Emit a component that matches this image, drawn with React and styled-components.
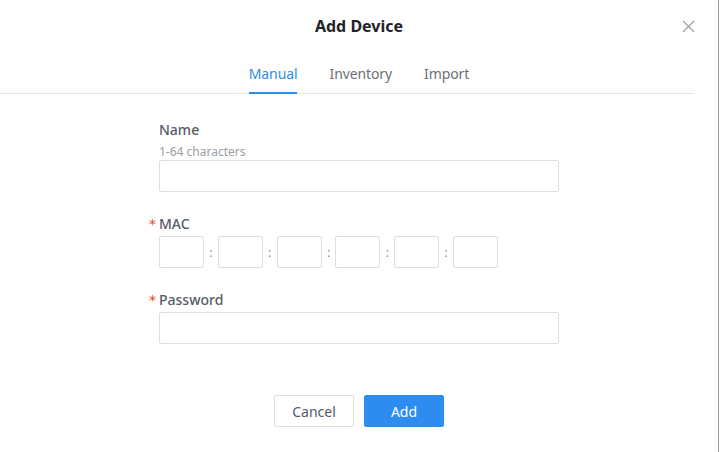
import React from "react";
import styled, { createGlobalStyle } from "styled-components";

const GlobalStyle = createGlobalStyle`
  html, body {
    margin: 0;
    padding: 0;
    background: #ffffff;
  }
  body {
    font-family: "Noto Sans", "Open Sans", Arial, sans-serif;
    -webkit-font-smoothing: antialiased;
  }
  * {
    box-sizing: border-box;
  }
`;

const Modal = styled.div`
  width: 719px;
  height: 452px;
  background: #fff;
  border-right: 1px solid #9a9a9a;
  display: flex;
  flex-direction: column;
`;

const Header = styled.div`
  height: 52px;
  display: grid;
  grid-template-columns: 1fr auto 1fr;
  align-items: center;
`;

const Title = styled.div`
  grid-column: 2;
  font-size: 16px;
  line-height: 24px;
  font-weight: 700;
  color: #1f2329;
`;

const Close = styled.button`
  grid-column: 3;
  justify-self: end;
  margin-right: 23px;
  width: 13px;
  height: 13px;
  padding: 0;
  border: 0;
  background: none;
  cursor: pointer;
  display: flex;
`;

const TabBar = styled.div`
  display: flex;
  justify-content: center;
  gap: 32px;
  margin-right: 24px;
  padding-left: 24px;
  border-bottom: 1px solid #e4e6eb;
`;

const Tab = styled.div`
  padding-top: 12px;
  padding-bottom: 8px;
  font-size: 14px;
  line-height: 20px;
  letter-spacing: -0.1px;
  color: ${(p) => (p.active ? "#2d8cf0" : "#6b6f76")};
  border-bottom: 2px solid ${(p) => (p.active ? "#2d8cf0" : "transparent")};
  margin-bottom: -1px;
  cursor: pointer;
`;

const Form = styled.div`
  width: 400px;
  margin: 0 auto;
  padding-top: 26px;
  display: flex;
  flex-direction: column;
`;

const Field = styled.div`
  display: flex;
  flex-direction: column;
  margin-bottom: 22px;
`;

const Label = styled.div`
  display: flex;
  align-items: center;
  font-size: 14px;
  line-height: 20px;
  font-weight: 500;
  color: #555b66;
  margin-bottom: ${(p) => (p.tight ? "0" : "2px")};
`;

const Star = styled.span`
  width: 10px;
  margin-left: -10px;
  color: #ed4014;
  font-size: 14px;
  line-height: 20px;
  font-family: "DejaVu Sans", sans-serif;
`;

const Hint = styled.div`
  font-size: 12px;
  line-height: 16px;
  color: #9a9ea6;
  margin-top: 4px;
`;

const Input = styled.input`
  width: ${(p) => p.w || "400px"};
  height: 32px;
  border: 1px solid #dcdee2;
  border-radius: 2px;
  padding: 0 8px;
  font-size: 14px;
  font-family: inherit;
  outline: none;
  background: #fff;
`;

const MacRow = styled.div`
  display: flex;
  align-items: center;
`;

const Colon = styled.span`
  width: 13.8px;
  text-align: center;
  font-size: 12px;
  color: #8a8f99;
`;

const Footer = styled.div`
  display: flex;
  justify-content: center;
  gap: 10px;
  margin-top: 29px;
`;

const Button = styled.button`
  width: 80px;
  height: 32px;
  border-radius: 2px;
  font-family: inherit;
  font-size: 14px;
  cursor: pointer;
  border: 1px solid ${(p) => (p.primary ? "#2d8cf0" : "#dcdee2")};
  background: ${(p) => (p.primary ? "#2d8cf0" : "#fff")};
  color: ${(p) => (p.primary ? "#fff" : "#515a6e")};
`;

export default function App() {
  const mac = [0, 1, 2, 3, 4, 5];
  return (
    <>
      <GlobalStyle />
      <Modal>
        <Header>
          <Title>Add Device</Title>
          <Close aria-label="close">
            <svg width="13" height="13" viewBox="0 0 13 13">
              <path d="M1 1L12 12M12 1L1 12" stroke="#9ea1a8" strokeWidth="1.3" fill="none" />
            </svg>
          </Close>
        </Header>
        <TabBar>
          <Tab active>Manual</Tab>
          <Tab>Inventory</Tab>
          <Tab>Import</Tab>
        </TabBar>
        <Form>
          <Field>
            <Label tight>Name</Label>
            <Hint>1-64 characters</Hint>
            <Input />
          </Field>
          <Field>
            <Label>
              <Star>*</Star>MAC
            </Label>
            <MacRow>
              {mac.map((i) => (
                <React.Fragment key={i}>
                  {i > 0 && <Colon>:</Colon>}
                  <Input w="45px" maxLength={2} />
                </React.Fragment>
              ))}
            </MacRow>
          </Field>
          <Field>
            <Label>
              <Star>*</Star>Password
            </Label>
            <Input type="password" />
          </Field>
        </Form>
        <Footer>
          <Button>Cancel</Button>
          <Button primary>Add</Button>
        </Footer>
      </Modal>
    </>
  );
}
